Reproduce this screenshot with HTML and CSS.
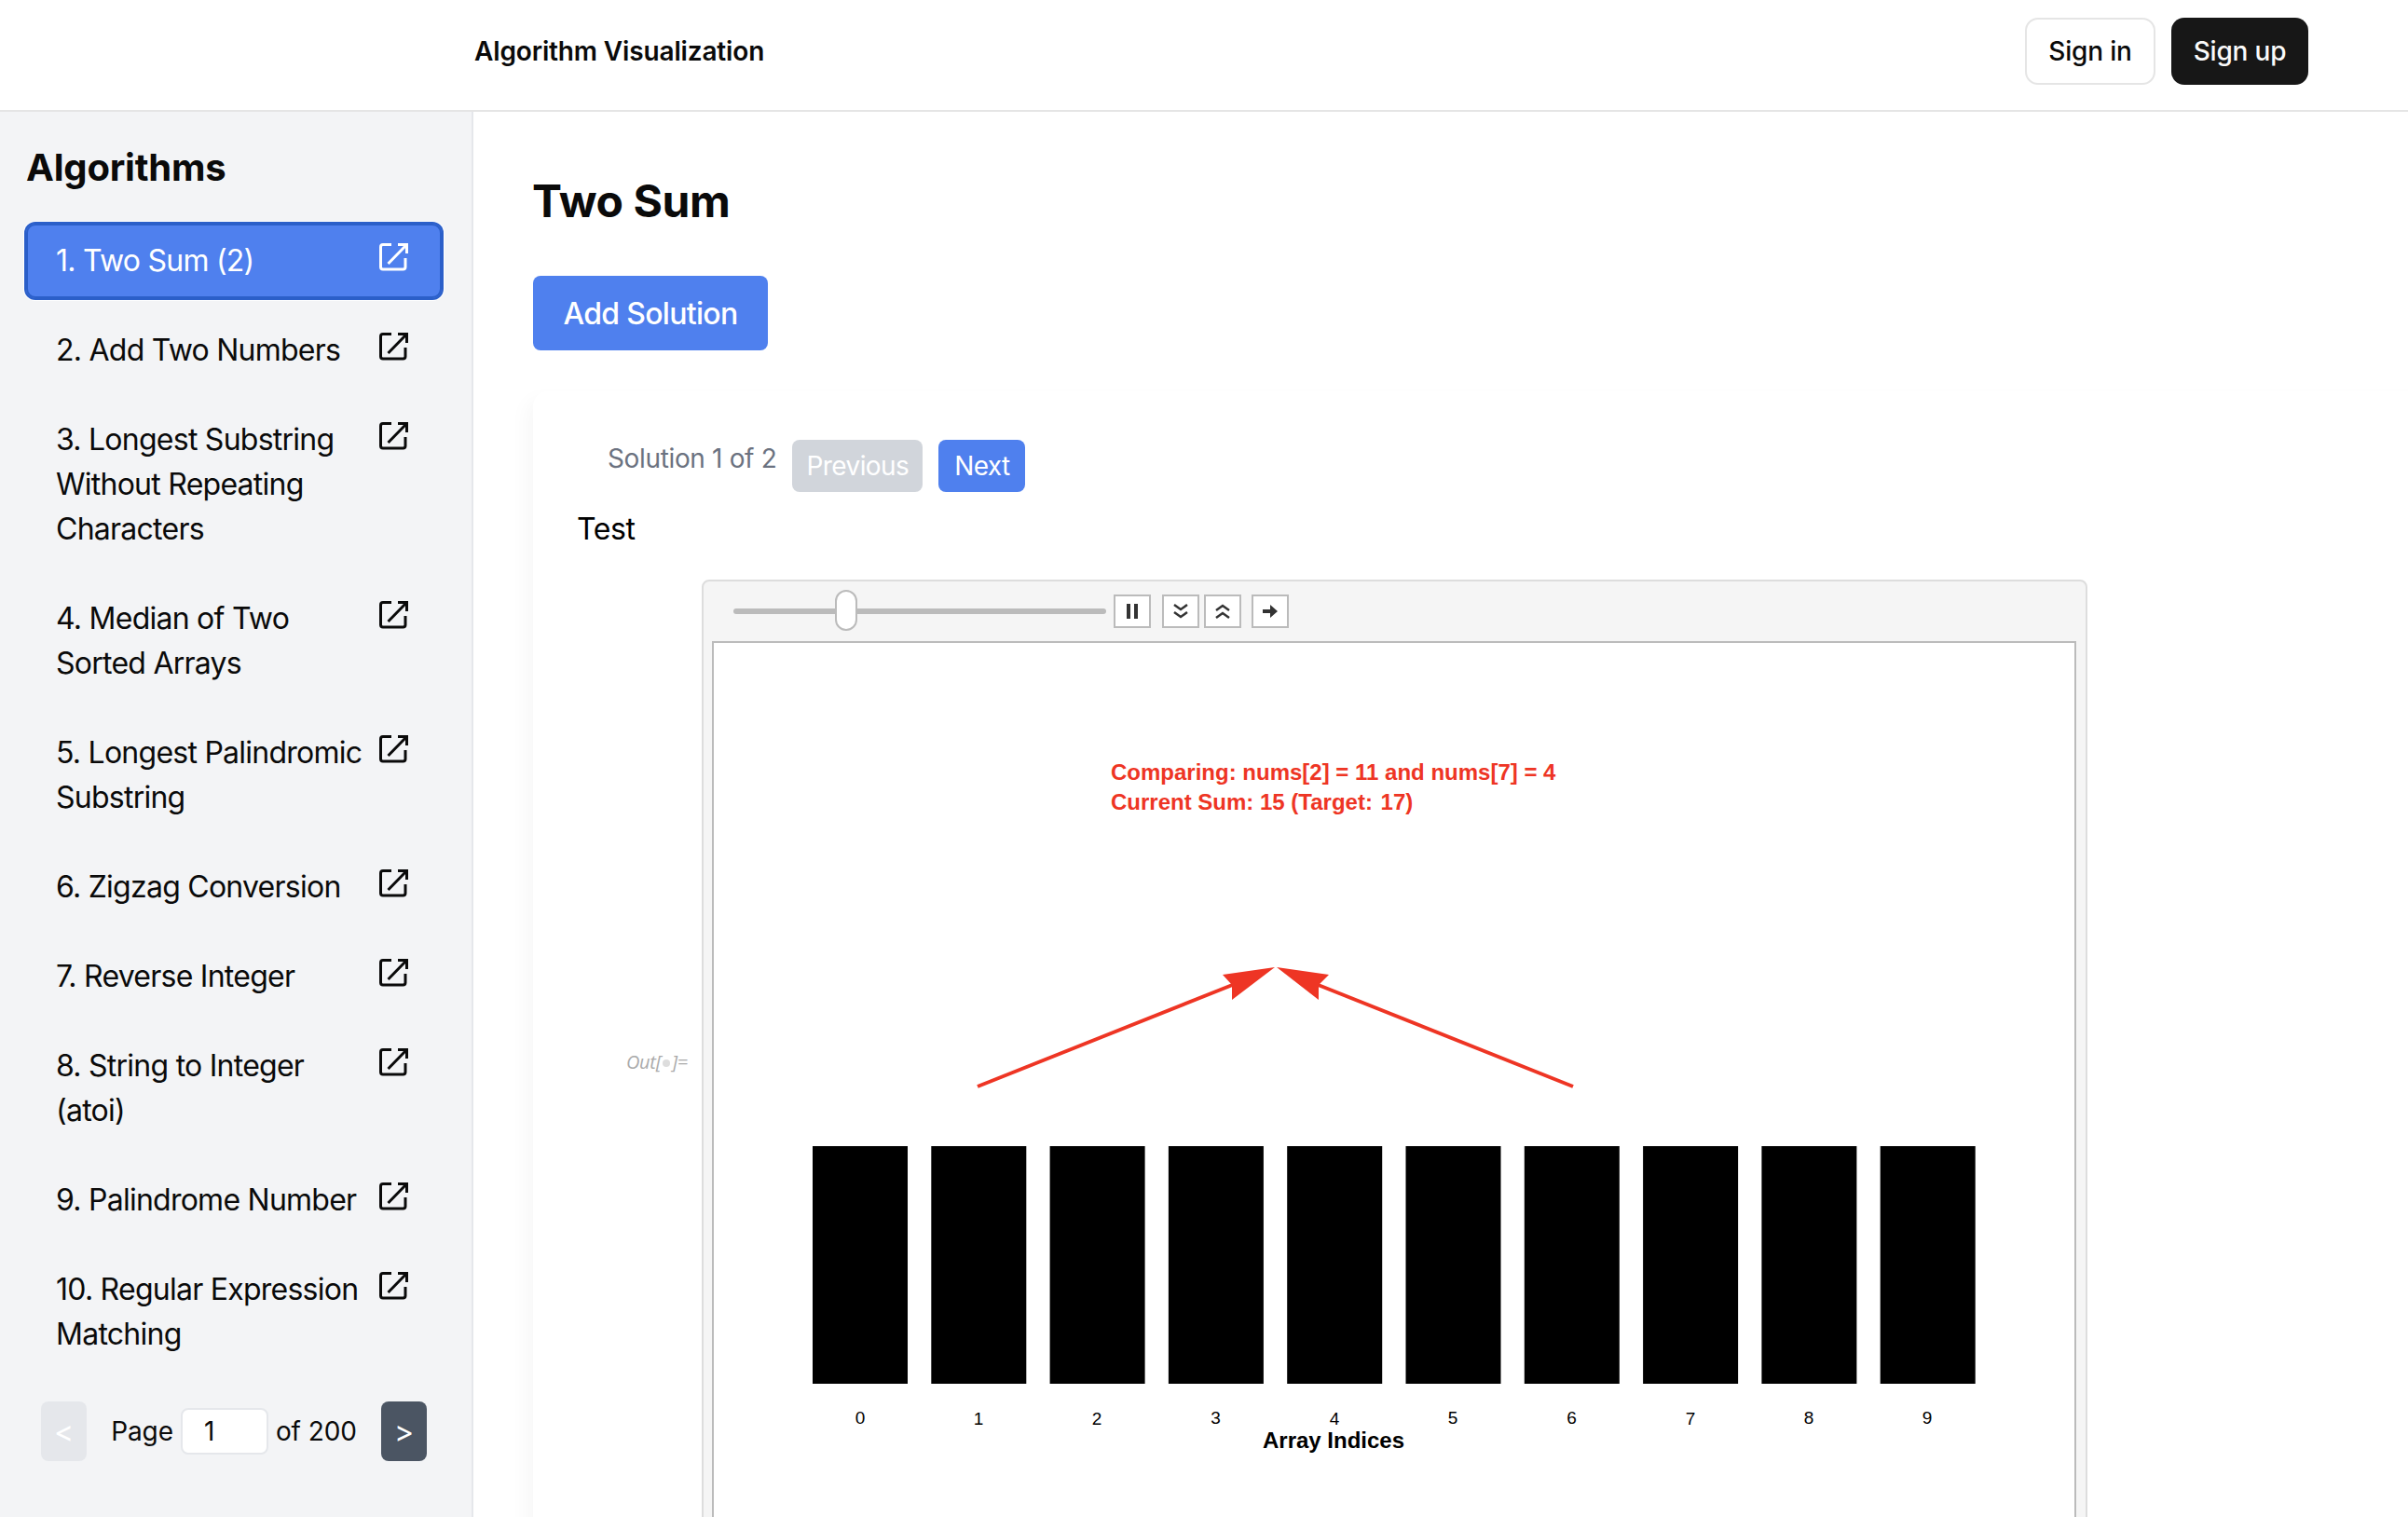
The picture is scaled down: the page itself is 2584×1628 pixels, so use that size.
FILE: index.html

```html
<!DOCTYPE html>
<html lang="en">
<head>
  <meta charset="UTF-8"/>
  <meta name="viewport" content="width=device-width, initial-scale=1.0"/>
  <title>Algorithm Visualization</title>
  <link rel="stylesheet" href="styles.css">
</head>
<body>
  <svg class="sprites" width="0" height="0">
    <symbol id="open-icon" viewBox="0 0 32 32">
      <path d="M14 3.500H5A2.500 2.500 0 0 0 2.500 6V27.500A2.500 2.500 0 0 0 5 30H26.500A2.500 2.500 0 0 0 29 27.500V18" fill="none" stroke="currentColor" stroke-width="3"/>
      <path d="M10.500 24L29 5M21 3.500H30.500V13" fill="none" stroke="currentColor" stroke-width="3"/>
    </symbol>
  </svg>

  <header class="topbar">
    <div class="brand">Algorithm Visualization</div>
    <div class="auth">
      <button class="btn-signin">Sign in</button>
      <button class="btn-signup">Sign up</button>
    </div>
  </header>

  <div class="layout">
    <aside class="sidebar">
      <h2 class="sidebar-title">Algorithms</h2>
      <ul class="algo-list">
        <li class="algo-item active"><span>1. Two Sum (2)</span><svg class="open-icon"><use href="#open-icon"/></svg></li>
        <li class="algo-item"><span>2. Add Two Numbers</span><svg class="open-icon"><use href="#open-icon"/></svg></li>
        <li class="algo-item"><span>3. Longest Substring Without Repeating Characters</span><svg class="open-icon"><use href="#open-icon"/></svg></li>
        <li class="algo-item"><span>4. Median of Two Sorted Arrays</span><svg class="open-icon"><use href="#open-icon"/></svg></li>
        <li class="algo-item"><span>5. Longest Palindromic Substring</span><svg class="open-icon"><use href="#open-icon"/></svg></li>
        <li class="algo-item"><span>6. Zigzag Conversion</span><svg class="open-icon"><use href="#open-icon"/></svg></li>
        <li class="algo-item"><span>7. Reverse Integer</span><svg class="open-icon"><use href="#open-icon"/></svg></li>
        <li class="algo-item"><span>8. String to Integer (atoi)</span><svg class="open-icon"><use href="#open-icon"/></svg></li>
        <li class="algo-item"><span>9. Palindrome Number</span><svg class="open-icon"><use href="#open-icon"/></svg></li>
        <li class="algo-item"><span>10. Regular Expression Matching</span><svg class="open-icon"><use href="#open-icon"/></svg></li>
      </ul>
      <div class="pager">
        <button class="pager-btn" disabled>&lt;</button>
        <div class="pager-mid">
          <span>Page</span>
          <input class="pager-input" type="text" value="1">
          <span>of 200</span>
        </div>
        <button class="pager-btn next">&gt;</button>
      </div>
    </aside>

    <main class="content">
      <h1 class="page-title">Two Sum</h1>
      <button class="add-btn">Add Solution</button>

      <section class="card">
        <div class="sol-nav">
          <span class="sol-count">Solution 1 of 2</span>
          <button class="sol-btn" disabled>Previous</button>
          <button class="sol-btn primary">Next</button>
        </div>
        <div class="sol-name">Test</div>

        <div class="out-row">
          <div class="out-label">Out[<span class="out-dot"></span>]=</div>
          <div class="manipulate">
            <div class="controls">
              <div class="slider"><div class="thumb"></div></div>
              <button class="ctl first">
                <svg viewBox="0 0 36 32"><path d="M12 8h4v16h-4zM20 8h4v16h-4z" fill="#333"/></svg>
              </button>
              <button class="ctl">
                <svg viewBox="0 0 36 32"><path d="M11 9l7 5 7-5M11 17l7 5 7-5" fill="none" stroke="#333" stroke-width="2.500"/></svg>
              </button>
              <button class="ctl close">
                <svg viewBox="0 0 36 32"><path d="M11 15l7-5 7 5M11 23l7-5 7 5" fill="none" stroke="#333" stroke-width="2.500"/></svg>
              </button>
              <button class="ctl">
                <svg viewBox="0 0 36 32"><path d="M10 14h8V9l8 7-8 7v-5h-8z" fill="#333"/></svg>
              </button>
            </div>
            <div class="pane">
              <!-- viewBox uses page coordinates of the pane -->
              <svg class="plot" viewBox="766 690 1460 960" width="1460" height="960">
                <text class="msg" x="1192" y="837">Comparing: nums[2] = 11 and nums[7] = 4</text>
                <text class="msg" x="1192" y="869">Current Sum: 15 (Target: <tspan dx="2">17)</tspan></text>

                <line class="arrow-line" x1="1049" y1="1166" x2="1325" y2="1056"/>
                <polygon class="arrow-head" points="1368,1038 1312,1046 1322,1057 1322,1073"/>
                <line class="arrow-line" x1="1688" y1="1166" x2="1412" y2="1056"/>
                <polygon class="arrow-head" points="1370,1038 1426,1046 1415,1057 1415,1073"/>

                <rect class="bar" x="872" y="1230" width="102" height="255"/>
                <rect class="bar" x="999.300" y="1230" width="102" height="255"/>
                <rect class="bar" x="1126.600" y="1230" width="102" height="255"/>
                <rect class="bar" x="1253.900" y="1230" width="102" height="255"/>
                <rect class="bar" x="1381.200" y="1230" width="102" height="255"/>
                <rect class="bar" x="1508.500" y="1230" width="102" height="255"/>
                <rect class="bar" x="1635.800" y="1230" width="102" height="255"/>
                <rect class="bar" x="1763.100" y="1230" width="102" height="255"/>
                <rect class="bar" x="1890.400" y="1230" width="102" height="255"/>
                <rect class="bar" x="2017.700" y="1230" width="102" height="255"/>

                <text class="idx" x="923" y="1528">0</text>
                <text class="idx" x="1050" y="1529">1</text>
                <text class="idx" x="1177" y="1529">2</text>
                <text class="idx" x="1304.500" y="1528">3</text>
                <text class="idx" x="1432" y="1529">4</text>
                <text class="idx" x="1559" y="1528">5</text>
                <text class="idx" x="1686.500" y="1528">6</text>
                <text class="idx" x="1814" y="1529">7</text>
                <text class="idx" x="1941" y="1528">8</text>
                <text class="idx" x="2068" y="1528">9</text>
                <text class="axis" x="1431" y="1554">Array Indices</text>
              </svg>
            </div>
          </div>
        </div>
      </section>
    </main>
  </div>
</body>
</html>
```

FILE: styles.css

```css
* {
  box-sizing: border-box;
}
html, body {
  height: 100%;
}
body {
  margin: 0;
  font-family: Inter, "Noto Sans", sans-serif;
  color: #0a0a0a;
  background: #fff;
  overflow: hidden;
  display: flex;
  flex-direction: column;
}
button, input {
  font-family: inherit;
}
.sprites {
  position: absolute;
}

/* top bar */
.topbar {
  flex: none;
  height: 120px;
  border-bottom: 2px solid #e5e5e5;
  padding: 0 107px 8px 509px;
  display: flex;
  align-items: center;
  justify-content: space-between;
}
.brand {
  font-size: 28px;
  font-weight: 600;
  letter-spacing: -.15px;
}
.auth {
  display: flex;
  gap: 17px;
}
.auth button {
  height: 72px;
  border-radius: 14px;
  font-size: 28px;
  font-weight: 500;
  letter-spacing: -.2px;
  cursor: pointer;
}
.btn-signin {
  width: 140px;
  background: #fff;
  border: 2px solid #e5e5e5;
  color: #0a0a0a;
}
.btn-signup {
  width: 147px;
  background: #171717;
  border: none;
  color: #fafafa;
}

.layout {
  flex: 1;
  display: flex;
  min-height: 0;
}

/* sidebar */
.sidebar {
  flex: none;
  width: 508px;
  background: #f3f4f6;
  border-right: 2px solid #e5e7eb;
  padding: 32px 32px 0 28px;
}
.sidebar-title {
  margin: 0 0 32px;
  font-size: 40px;
  line-height: 56px;
  font-weight: 700;
  letter-spacing: -.2px;
}
.algo-list {
  list-style: none;
  margin: 0;
  padding: 0;
  display: flex;
  flex-direction: column;
  gap: 16px;
}
.algo-item {
  display: flex;
  justify-content: space-between;
  padding: 16px 32px;
  font-size: 32px;
  line-height: 48px;
  letter-spacing: -.75px;
  border-radius: 10px;
}
.algo-item.active {
  background: #4f80ee;
  color: #fff;
  box-shadow: inset 0 0 0 2px #2b5fc9, 0 0 0 2px #2b5fc9, 0 0 0 3px #fff;
}
.open-icon {
  flex: none;
  width: 32px;
  height: 32px;
  margin: 3px 4px 0 8px;
}
.pager {
  margin-top: 32px;
  padding: 0 16px;
  display: flex;
  align-items: center;
  justify-content: space-between;
}
.pager-btn {
  width: 49px;
  height: 64px;
  border: none;
  border-radius: 8px;
  background: #e5e7eb;
  color: #fff;
  font-size: 32px;
}
.pager-btn.next {
  background: #4b5563;
}
.pager-mid {
  display: flex;
  align-items: center;
  gap: 8px;
  font-size: 28px;
  letter-spacing: -.1px;
}
.pager-input {
  width: 94px;
  height: 50px;
  border: 2px solid #e5e7eb;
  border-radius: 8px;
  background: #fff;
  padding: 0 23px;
  font-size: 28px;
  color: #0a0a0a;
}

/* main column */
.content {
  flex: 1;
  min-width: 0;
  padding: 64px 64px 0;
  overflow: hidden;
}
.page-title {
  margin: 0 0 48px -1px;
  font-size: 48px;
  line-height: 64px;
  font-weight: 700;
  letter-spacing: -.4px;
}
.add-btn {
  display: block;
  width: 252px;
  height: 80px;
  border: none;
  border-radius: 8px;
  background: #4f80ee;
  color: #fff;
  font-size: 32px;
  font-weight: 500;
  letter-spacing: -.7px;
}
.card {
  margin: 44px -100px 0 0;
  padding: 52px 48px 0;
  height: 1400px;
  border-radius: 16px;
  background: #fff;
  box-shadow: -8px 8px 20px rgba(0, 0, 0, .03);
}
.sol-nav {
  display: flex;
  align-items: flex-start;
  padding-left: 32px;
}
.sol-count {
  margin-right: 17px;
  font-size: 28px;
  line-height: 40px;
  letter-spacing: -.35px;
  color: #6b7280;
}
.sol-btn {
  height: 56px;
  width: 140px;
  margin-right: 17px;
  padding: 0;
  border: none;
  border-radius: 8px;
  background: #d1d5db;
  color: #fff;
  font-size: 28px;
  letter-spacing: -.6px;
}
.sol-btn.primary {
  width: 93px;
  background: #4f80ee;
}
.sol-name {
  margin: 16px 0 30px -1px;
  font-size: 32px;
  line-height: 48px;
  letter-spacing: -.4px;
  color: #000;
}

/* notebook output */
.out-row {
  display: flex;
  align-items: center;
  gap: 14px;
  padding-left: 52px;
}
.out-label {
  width: 67px;
  font-family: "Open Sans", sans-serif;
  font-size: 20px;
  font-style: italic;
  letter-spacing: -.3px;
  color: #aaa;
  white-space: nowrap;
}
.out-dot {
  display: inline-block;
  width: 8px;
  height: 8px;
  margin: 0 2px 2px;
  border-radius: 50%;
  background: #ddd;
}
.manipulate {
  flex: none;
  width: 1487px;
  height: 1034px;
  border: 2px solid #ddd;
  border-radius: 8px;
  background: #f5f5f5;
  padding: 0 10px 0 9px;
}
.controls {
  height: 64px;
  padding-left: 23px;
  display: flex;
  align-items: center;
}
.slider {
  position: relative;
  width: 400px;
  height: 6px;
  border-radius: 3px;
  background: #bbb;
  margin-right: 8px;
}
.thumb {
  position: absolute;
  left: 109px;
  top: -20px;
  width: 24px;
  height: 44px;
  border: 2px solid #bbb;
  border-radius: 12px;
  background: #fff;
}
.ctl {
  width: 40px;
  height: 36px;
  padding: 0;
  border: 2px solid #bbb;
  background: #fff;
  margin-left: 12px;
}
.ctl.first {
  margin-left: 0;
}
.ctl.close {
  margin: 0 0 0 5px;
}
.ctl + .ctl.close + .ctl {
  margin-left: 11px;
}
.ctl svg {
  display: block;
  width: 36px;
  height: 32px;
}
.pane {
  width: 1464px;
  height: 960px;
  border: 2px solid #bbb;
  border-bottom: none;
  background: #fff;
}
.plot {
  display: block;
}
.msg {
  font-family: "Liberation Sans", Arial, sans-serif;
  font-size: 24px;
  font-weight: 700;
  fill: #ee3524;
}
.arrow-line {
  stroke: #ee3524;
  stroke-width: 4;
}
.arrow-head {
  fill: #ee3524;
}
.bar {
  fill: #000;
}
.idx {
  font-family: "Liberation Sans", Arial, sans-serif;
  font-size: 19px;
  text-anchor: middle;
  fill: #000;
}
.axis {
  font-family: "Liberation Sans", Arial, sans-serif;
  font-size: 24px;
  font-weight: 700;
  text-anchor: middle;
  fill: #000;
}
```
